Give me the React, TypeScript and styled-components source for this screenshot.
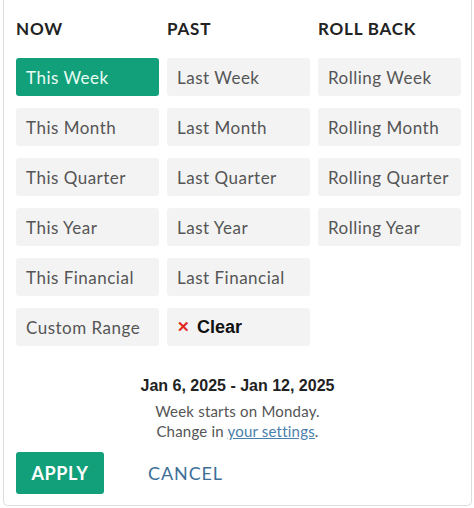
import styled, { createGlobalStyle } from 'styled-components';

const GlobalStyle = createGlobalStyle`
  body {
    margin: 0;
    background: #ffffff;
    font-family: 'Lato', 'Open Sans', sans-serif;
  }
`;

const Panel = styled.div`
  box-sizing: border-box;
  width: 469px;
  height: 506px;
  margin-left: 3px;
  padding: 19px 12px 0 12px;
  border: 1px solid #dcdcdc;
  border-top: none;
  border-radius: 0 0 5px 5px;
  background: #fff;
`;

const Grid = styled.div`
  display: grid;
  grid-template-columns: repeat(3, 143px);
  column-gap: 8px;
  row-gap: 12px;
`;

const Heading = styled.div`
  font-size: 17px;
  font-weight: 700;
  line-height: 20px;
  color: #222;
  margin-bottom: 7px;
  letter-spacing: 0.8px;
`;

const Option = styled.button<{ $active?: boolean }>`
  display: flex;
  align-items: center;
  gap: 8px;
  height: 38px;
  padding: 0 10px;
  border: none;
  border-radius: 3px;
  background: ${p => (p.$active ? '#12a07a' : '#f3f3f3')};
  color: ${p => (p.$active ? '#eafcf4' : '#555')};
  font-family: inherit;
  font-size: 17px;
  letter-spacing: 0.5px;
  text-align: left;
  cursor: pointer;
`;

const ClearButton = styled(Option)`
  font-family: 'Liberation Sans', Arial, sans-serif;
  font-weight: 700;
  font-size: 18px;
  letter-spacing: 0;
  gap: 7px;
  color: #111;
`;

const Cross = styled.span`
  color: #e0281c;
  font-size: 15px;
  font-weight: 700;
`;

const Summary = styled.div`
  margin-top: 30px;
  text-align: center;
  color: #555;
  font-size: 15px;
  line-height: 20px;
  letter-spacing: 0.2px;
`;

const Range = styled.div`
  font-family: 'Liberation Sans', Arial, sans-serif;
  font-weight: 700;
  font-size: 16px;
  letter-spacing: 0;
  color: #222;
  margin-bottom: 5px;
`;

const Link = styled.a`
  color: #4a80ab;
  text-decoration: underline;
`;

const Footer = styled.div`
  display: flex;
  align-items: center;
  gap: 44px;
  margin-top: 11px;
`;

const ApplyButton = styled.button`
  height: 42px;
  width: 88px;
  border: none;
  border-radius: 3px;
  background: #12a07a;
  color: #fff;
  font-family: inherit;
  font-size: 18px;
  font-weight: 700;
  letter-spacing: 0.6px;
`;

const CancelButton = styled.button`
  border: none;
  background: none;
  padding: 0;
  color: #3e6f97;
  font-family: inherit;
  font-size: 18px;
  letter-spacing: 0.9px;
`;

const rows: (string | null)[][] = [
  ['This Week', 'Last Week', 'Rolling Week'],
  ['This Month', 'Last Month', 'Rolling Month'],
  ['This Quarter', 'Last Quarter', 'Rolling Quarter'],
  ['This Year', 'Last Year', 'Rolling Year'],
  ['This Financial', 'Last Financial', null],
];

const App = () => {
  return (
    <>
      <GlobalStyle />
      <Panel>
        <Grid>
          <Heading>NOW</Heading>
          <Heading>PAST</Heading>
          <Heading>ROLL BACK</Heading>
          {rows.flatMap((row, i) =>
            row.map((label, j) =>
              label ? (
                <Option key={`${i}-${j}`} $active={label === 'This Week'}>
                  {label}
                </Option>
              ) : (
                <div key={`${i}-${j}`} />
              )
            )
          )}
          <Option>Custom Range</Option>
          <ClearButton>
            <Cross>✕</Cross>
            Clear
          </ClearButton>
        </Grid>
        <Summary>
          <Range>Jan 6, 2025 - Jan 12, 2025</Range>
          <div>Week starts on Monday.</div>
          <div>
            Change in <Link href="#">your settings</Link>.
          </div>
        </Summary>
        <Footer>
          <ApplyButton>APPLY</ApplyButton>
          <CancelButton>CANCEL</CancelButton>
        </Footer>
      </Panel>
    </>
  );
};

export default App;
